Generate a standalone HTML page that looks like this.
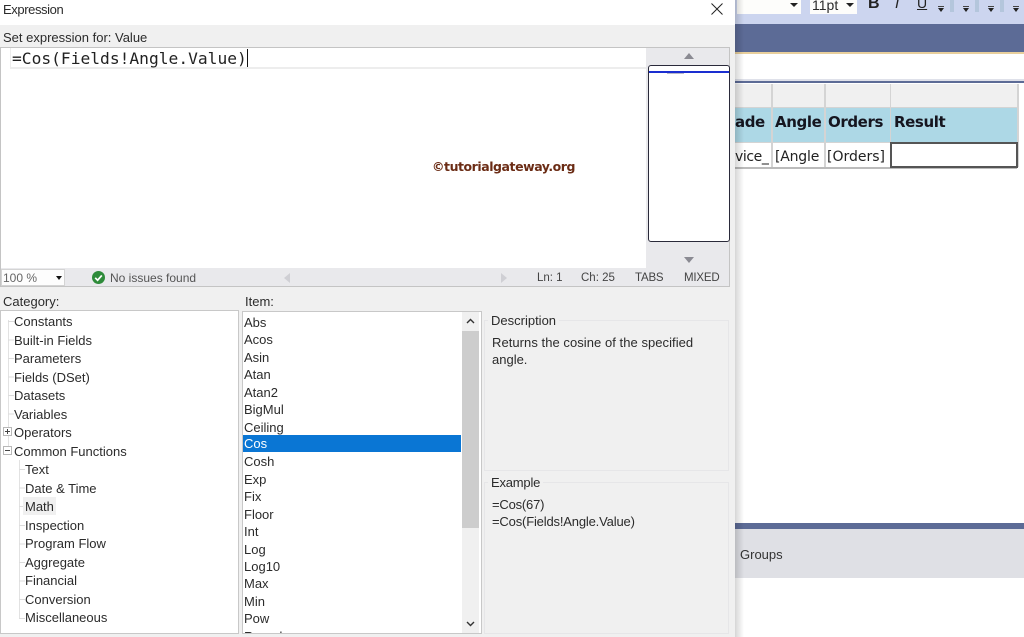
<!DOCTYPE html>
<html><head><meta charset="utf-8"><style>
html,body{margin:0;padding:0;background:#fff}
#p{position:relative;width:1024px;height:637px;overflow:hidden;background:#fff;font-family:"Liberation Sans",sans-serif;font-size:13px;color:#2b2b2b}
#p div{position:absolute}
.t{white-space:nowrap;line-height:18px;height:18px}
.h{font-family:"DejaVu Sans",sans-serif;font-weight:bold;font-size:15px;letter-spacing:-.4px;color:#15151f;white-space:nowrap;line-height:18px}
.c{font-family:"DejaVu Sans",sans-serif;font-size:14px;color:#222;white-space:nowrap;line-height:18px}
.ln{background:#d4d4d4}
.s{font-size:11.5px;color:#444}
</style></head><body><div id="p">
<!-- background app -->
<div style="left:735px;top:0;width:289px;height:24px;background:#ccd5ef"></div>
<div style="left:737px;top:0;width:64px;height:14px;background:#fdfdfb"></div>
<div style="left:790px;top:3px;width:0;height:0;border:4px solid transparent;border-top:4px solid #222;border-bottom:0"></div>
<div style="left:810px;top:0;width:47px;height:14px;background:#fdfdfb"></div>
<div class="t" style="left:812px;top:-4px;font-size:14px">11pt</div>
<div style="left:846px;top:3px;width:0;height:0;border:4px solid transparent;border-top:4px solid #222;border-bottom:0"></div>
<div class="t" style="left:868px;top:-5px;font-weight:bold;font-size:16px;color:#222">B</div>
<div class="t" style="left:895px;top:-5px;font-style:italic;font-size:15px;color:#222">I</div>
<div class="t" style="left:917px;top:-6px;font-size:14px;color:#222;text-decoration:underline">U</div>
<div style="left:938px;top:6px;width:6px;height:1px;background:#444"></div>
<div style="left:938px;top:8px;width:0;height:0;border:3px solid transparent;border-top:4px solid #222;border-bottom:0"></div>
<div style="left:963px;top:6px;width:6px;height:1px;background:#444"></div>
<div style="left:963px;top:8px;width:0;height:0;border:3px solid transparent;border-top:4px solid #222;border-bottom:0"></div>
<div style="left:988px;top:6px;width:6px;height:1px;background:#444"></div>
<div style="left:988px;top:8px;width:0;height:0;border:3px solid transparent;border-top:4px solid #222;border-bottom:0"></div>
<div style="left:1013px;top:6px;width:6px;height:1px;background:#444"></div>
<div style="left:1013px;top:8px;width:0;height:0;border:3px solid transparent;border-top:4px solid #222;border-bottom:0"></div>
<div style="left:950px;top:0;width:4px;height:12px;background:#b4c6dc"></div>
<div style="left:975px;top:0;width:4px;height:12px;background:#b4c6dc"></div>
<div style="left:1000px;top:0;width:4px;height:12px;background:#b4c6dc"></div>
<div style="left:735px;top:24px;width:289px;height:28px;background:#5c6b96"></div>
<div style="left:735px;top:52px;width:289px;height:2px;background:#e8cf9c"></div>
<div style="left:735px;top:79px;width:289px;height:2px;background:#dfe1ea"></div>
<div style="left:735px;top:81px;width:289px;height:2px;background:#5c6b96"></div>
<div style="left:735px;top:84px;width:282px;height:23px;background:#f0f0f0"></div>
<div style="left:735px;top:107px;width:282px;height:35px;background:#add8e6"></div>
<div style="left:735px;top:142px;width:282px;height:25px;background:#fff"></div>
<div class="ln" style="left:735px;top:107px;width:282px;height:1px"></div>
<div class="ln" style="left:735px;top:142px;width:282px;height:1px"></div>
<div class="ln" style="left:735px;top:167px;width:282px;height:2px;background:#bbb"></div>
<div class="ln" style="left:771px;top:84px;width:2px;height:83px"></div>
<div class="ln" style="left:824px;top:84px;width:2px;height:83px"></div>
<div class="ln" style="left:890px;top:84px;width:1px;height:83px"></div>
<div class="ln" style="left:1017px;top:84px;width:2px;height:83px"></div>
<div class="h" style="left:735px;top:113px">ade</div>
<div class="h" style="left:775px;top:113px">Angle</div>
<div class="h" style="left:828px;top:113px">Orders</div>
<div class="h" style="left:894px;top:113px">Result</div>
<div class="c" style="left:735px;top:148px;letter-spacing:-.4px">vice_</div>
<div class="c" style="left:775px;top:148px;letter-spacing:-.2px">[Angle</div>
<div class="c" style="left:827px;top:148px">[Orders]</div>
<div style="left:890px;top:142px;width:124px;height:22px;border:2px solid #555"></div>
<div style="left:735px;top:523px;width:289px;height:6px;background:#5c6b96"></div>
<div style="left:735px;top:529px;width:289px;height:49px;background:#dfe0e5"></div>
<div class="t" style="left:740px;top:546px;color:#333">Groups</div>
<!-- dialog shadow -->
<div style="left:735px;top:0;width:9px;height:637px;background:linear-gradient(90deg,rgba(0,0,0,.16),rgba(0,0,0,0))"></div>
<!-- dialog -->
<div style="left:0;top:0;width:735px;height:637px;background:#f0f0f0"></div>
<div style="left:0;top:0;width:735px;height:25px;background:#fff"></div>
<div class="t" style="left:3px;top:1px;letter-spacing:-.4px">Expression</div>
<svg style="position:absolute;left:711px;top:3px" width="12" height="12"><path d="M.5 .5L11.5 11.5M11.5 .5L.5 11.5" stroke="#222" stroke-width="1" fill="none"/></svg>
<div class="t" style="left:3px;top:29px">Set expression for: Value</div>
<!-- editor -->
<div style="left:0;top:47px;width:730px;height:240px;background:#e9e9ec;box-shadow:inset 0 0 0 1px #c4c4c4"></div>
<div style="left:1px;top:48px;width:645px;height:220px;background:#fff"></div>
<div style="left:10px;top:48px;width:636px;height:21px;background:#fff;border-bottom:2px solid #ededed;border-left:1px solid #ededed;box-sizing:border-box"></div>
<div class="t" style="left:12px;top:50px;font-family:'DejaVu Sans Mono',monospace;font-size:16.25px;color:#222">=Cos(Fields!Angle.Value)</div>
<div style="left:247px;top:49px;width:1px;height:18px;background:#111"></div>
<div style="left:684px;top:53px;width:0;height:0;border:5px solid transparent;border-bottom:6px solid #8a8a92;border-top:0"></div>
<div style="left:684px;top:257px;width:0;height:0;border:5px solid transparent;border-top:6px solid #8a8a92;border-bottom:0"></div>
<div style="left:648px;top:65px;width:80px;height:175px;background:#fff;border:1px solid #2a2a3a;border-radius:3px"></div>
<div style="left:649px;top:71px;width:80px;height:2px;background:#1a2ed0"></div>
<div style="left:667px;top:73px;width:17px;height:1px;background:#b8b8c8"></div>
<!-- status -->
<div style="left:1px;top:269px;width:64px;height:17px;background:#fdfdfd;border:1px solid #d4d4d4;box-sizing:border-box"></div>
<div class="t" style="left:3px;top:269px;font-size:12px;color:#666">100 %</div>
<div style="left:56px;top:276px;width:0;height:0;border:3.5px solid transparent;border-top:4px solid #111;border-bottom:0"></div>
<svg style="position:absolute;left:92px;top:271px" width="13" height="13"><circle cx="6.5" cy="6.5" r="6.5" fill="#2e8b3a"/><path d="M3.2 6.8L5.6 9.2L9.8 4.4" stroke="#fff" stroke-width="1.7" fill="none"/></svg>
<div class="t" style="left:110px;top:269px;font-size:12px;color:#555">No issues found</div>
<div style="left:284px;top:273px;width:0;height:0;border:5px solid transparent;border-right:6px solid #cfcfd4;border-left:0"></div>
<div style="left:501px;top:273px;width:0;height:0;border:5px solid transparent;border-left:6px solid #cfcfd4;border-right:0"></div>
<div class="t s" style="left:537px;top:269px">Ln: 1</div>
<div class="t s" style="left:581px;top:269px">Ch: 25</div>
<div class="t s" style="left:635px;top:269px;letter-spacing:-.2px">TABS</div>
<div class="t s" style="left:684px;top:269px;letter-spacing:-.2px">MIXED</div>
<!-- category -->
<div class="t" style="left:3px;top:293px">Category:</div>
<div class="t" style="left:245px;top:293px">Item:</div>
<div style="left:0;top:310px;width:239px;height:324px;background:#fff;border:1px solid #c8c8c8;box-sizing:border-box"></div>
<div style="left:8px;top:320px;width:1px;height:130px;background:#e2e2e2"></div>
<div style="left:8px;top:321px;width:6px;height:95px;background:repeating-linear-gradient(to bottom,#dcdcdc 0 1px,transparent 1px 18.5px)"></div>
<div style="left:19px;top:460px;width:1px;height:158px;background:#e2e2e2"></div>
<div style="left:19px;top:469px;width:6px;height:150px;background:repeating-linear-gradient(to bottom,#dcdcdc 0 1px,transparent 1px 18.6px)"></div>
<div class="t" style="left:14px;top:313px">Constants</div>
<div class="t" style="left:14px;top:332px">Built-in Fields</div>
<div class="t" style="left:14px;top:350px">Parameters</div>
<div class="t" style="left:14px;top:369px">Fields (DSet)</div>
<div class="t" style="left:14px;top:387px">Datasets</div>
<div class="t" style="left:14px;top:406px">Variables</div>
<div style="left:3px;top:427px;width:9px;height:9px;background:#fff;border:1px solid #b8b8b8;box-sizing:border-box"></div>
<div style="left:5px;top:431px;width:5px;height:1px;background:#444"></div>
<div style="left:7px;top:429px;width:1px;height:5px;background:#444"></div>
<div class="t" style="left:14px;top:424px">Operators</div>
<div style="left:3px;top:446px;width:9px;height:9px;background:#fff;border:1px solid #b8b8b8;box-sizing:border-box"></div>
<div style="left:5px;top:450px;width:5px;height:1px;background:#444"></div>
<div class="t" style="left:14px;top:443px">Common Functions</div>
<div class="t" style="left:25px;top:461px">Text</div>
<div class="t" style="left:25px;top:480px">Date &amp; Time</div>
<div style="left:23px;top:497px;width:33px;height:18px;background:#f0f0f0"></div>
<div class="t" style="left:25px;top:498px">Math</div>
<div class="t" style="left:25px;top:517px">Inspection</div>
<div class="t" style="left:25px;top:535px">Program Flow</div>
<div class="t" style="left:25px;top:554px">Aggregate</div>
<div class="t" style="left:25px;top:572px">Financial</div>
<div class="t" style="left:25px;top:591px">Conversion</div>
<div class="t" style="left:25px;top:609px">Miscellaneous</div>
<!-- items -->
<div style="left:242px;top:311px;width:240px;height:323px;background:#fff;border:1px solid #c8c8c8;box-sizing:border-box;overflow:hidden"></div>
<div class="t" style="left:244px;top:314px">Abs</div>
<div class="t" style="left:244px;top:331px">Acos</div>
<div class="t" style="left:244px;top:349px">Asin</div>
<div class="t" style="left:244px;top:366px">Atan</div>
<div class="t" style="left:244px;top:384px">Atan2</div>
<div class="t" style="left:244px;top:401px">BigMul</div>
<div class="t" style="left:244px;top:419px">Ceiling</div>
<div style="left:243px;top:435px;width:218px;height:17px;background:#0a76d4"></div>
<div class="t" style="left:244px;top:435px;color:#fff">Cos</div>
<div class="t" style="left:244px;top:453px">Cosh</div>
<div class="t" style="left:244px;top:471px">Exp</div>
<div class="t" style="left:244px;top:488px">Fix</div>
<div class="t" style="left:244px;top:506px">Floor</div>
<div class="t" style="left:244px;top:523px">Int</div>
<div class="t" style="left:244px;top:541px">Log</div>
<div class="t" style="left:244px;top:558px">Log10</div>
<div class="t" style="left:244px;top:575px">Max</div>
<div class="t" style="left:244px;top:593px">Min</div>
<div class="t" style="left:244px;top:610px">Pow</div>
<div style="left:243px;top:628px;width:218px;height:5px;overflow:hidden"><div class="t" style="left:1px;top:0">Round</div></div>
<div style="left:462px;top:312px;width:17px;height:321px;background:#f0f0f0"></div>
<div style="left:462px;top:331px;width:17px;height:197px;background:#cdcdcd"></div>
<svg style="position:absolute;left:466px;top:318px" width="9" height="6"><path d="M1 5L4.5 1.5L8 5" stroke="#333" stroke-width="1.4" fill="none"/></svg>
<svg style="position:absolute;left:466px;top:621px" width="9" height="6"><path d="M1 1L4.5 4.5L8 1" stroke="#333" stroke-width="1.4" fill="none"/></svg>
<!-- groups -->
<div style="left:484px;top:320px;width:245px;height:151px;border:1px solid #e6e6e8;box-sizing:border-box"></div>
<div class="t" style="left:488px;top:312px;background:#f0f0f0;padding:0 3px">Description</div>
<div class="t" style="left:492px;top:334px;letter-spacing:.05px">Returns the cosine of the specified</div>
<div class="t" style="left:492px;top:351px">angle.</div>
<div style="left:484px;top:482px;width:245px;height:152px;border:1px solid #e6e6e8;box-sizing:border-box"></div>
<div class="t" style="left:488px;top:474px;background:#f0f0f0;padding:0 3px;letter-spacing:-.2px">Example</div>
<div class="t" style="left:492px;top:496px;letter-spacing:-.2px">=Cos(67)</div>
<div class="t" style="left:492px;top:513px;letter-spacing:-.17px">=Cos(Fields!Angle.Value)</div>
<div class="t" style="left:432px;top:158px;font-family:'DejaVu Sans',sans-serif;font-weight:bold;font-size:12.5px;letter-spacing:-.45px;color:#6b2c15">©tutorialgateway.org</div>
</div></body></html>
